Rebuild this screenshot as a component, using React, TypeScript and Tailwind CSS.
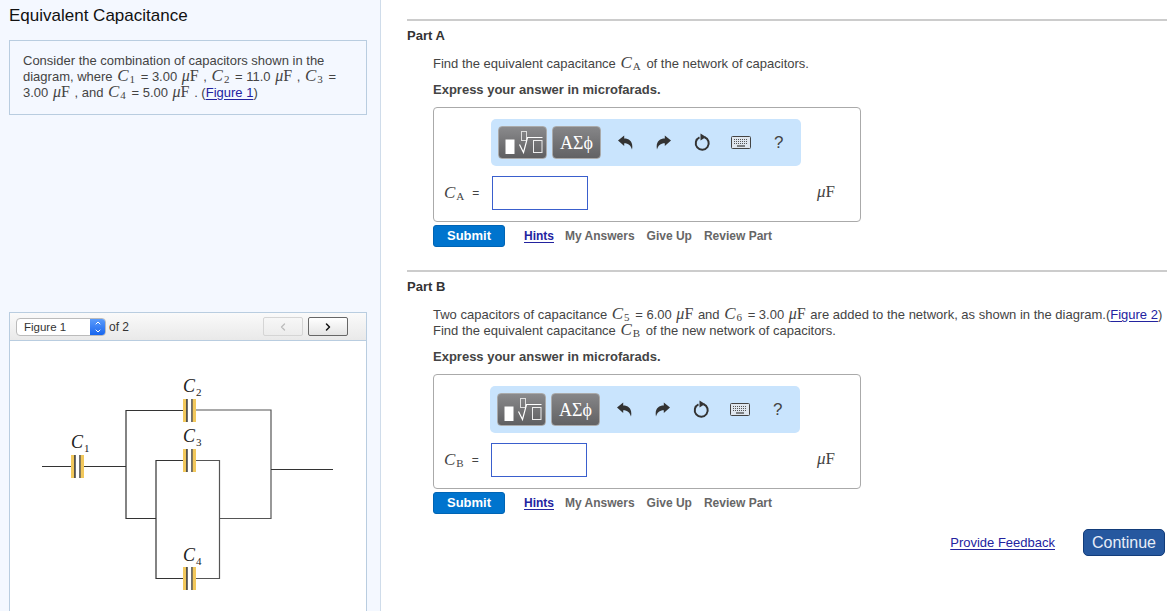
import { ChevronLeft, ChevronRight, ChevronUp, ChevronDown } from "lucide-react";
import type { ReactNode } from "react";

const Sym = ({ c, sub }: { c: string; sub?: string }) => (
    <span className="font-['Liberation_Serif',serif] whitespace-nowrap text-[#444] leading-[0] ml-[1px] mr-[2px]">
        <i className="text-[17px]">{c}</i>
        {sub && <span className="text-[11px] relative top-[2px] ml-[1px]">{sub}</span>}
    </span>
);

const Unit = ({ big }: { big?: boolean }) => (
    <span className={`font-['Liberation_Serif',serif] text-[#444] whitespace-nowrap leading-[0] mx-[1px] ${big ? "text-[17px]" : "text-[16px]"}`}><i>μ</i>F</span>
);

const Link = ({ children }: { children: ReactNode }) => (
    <a className="text-[#23239f] underline underline-offset-2">{children}</a>
);

const UndoIcon = ({ flip }: { flip?: boolean }) => (
    <svg className={flip ? "-scale-x-100" : ""} width="15" height="15" viewBox="0 0 15 15">
        <path d="M0 5.5 L6.2 0.5 V3.6 C11.5 3.6 15.5 7 14 14.5 C13 10.5 10.5 8.2 6.2 8.2 V11 Z" fill="#333" />
    </svg>
);

const ReloadIcon = () => (
    <svg width="17" height="19" viewBox="0 0 17 19" fill="none">
        <path d="M10.5 4.2 A6.5 6.5 0 1 1 5.5 4.4" stroke="#333" strokeWidth="2" />
        <path d="M6.5 0.5 L12 4 L6.5 7.5 Z" fill="#333" />
    </svg>
);

const KeyboardIcon = () => (
    <svg width="20" height="13" viewBox="0 0 20 13">
        <rect x="0.5" y="0.5" width="19" height="12" rx="1" fill="#dfe6ee" stroke="#444" />
        <path d="M3 3.5h14M3 5.5h14M3 7.5h14" stroke="#555" strokeWidth="1" strokeDasharray="1 1" />
        <path d="M6 10h8" stroke="#555" strokeWidth="1.4" />
    </svg>
);

const TemplatesIcon = () => (
    <svg width="40" height="28" viewBox="0 0 40 28" fill="none">
        <rect x="2.5" y="10.5" width="9" height="14.5" fill="#fff" />
        <rect x="18.5" y="2.5" width="5" height="9" stroke="#ddd" strokeWidth="1" />
        <path d="M16.5 15.5 L20.5 23.5 L24.5 8.5 H39.5" stroke="#fff" strokeWidth="1.2" />
        <rect x="30.5" y="11.5" width="8.5" height="12" stroke="#eee" strokeWidth="1" />
    </svg>
);

const Toolbar = ({ className }: { className: string }) => (
    <div className={`h-[47px] w-[310px] rounded-[5px] bg-[#c9e4fd] flex items-center pl-[7px] ${className}`}>
        <button className="w-[49px] h-[33px] rounded-[4px] bg-gradient-to-b from-[#8a8a8c] to-[#5f5f61] border border-[#aaa] flex items-center justify-center">
            <TemplatesIcon />
        </button>
        <button className="w-[49px] h-[33px] ml-[5px] rounded-[4px] bg-gradient-to-b from-[#868688] to-[#626264] border border-[#aaa] text-white text-[18px] font-['Liberation_Serif',serif] flex items-center justify-center">
            ΑΣϕ
        </button>
        <div className="flex items-center">
            <span className="ml-[17px] flex"><UndoIcon /></span>
            <span className="ml-[23px] flex"><UndoIcon flip /></span>
            <span className="ml-[23px] flex"><ReloadIcon /></span>
            <span className="ml-[20px] flex"><KeyboardIcon /></span>
            <span className="ml-[23px] text-[17px] text-[#444]">?</span>
        </div>
    </div>
);

const AnswerBox = ({ name, toolbarLeft, inputLeft }: { name: string; toolbarLeft: string; inputLeft: string }) => (
    <div className="h-[115px] w-[428px] border border-[#aaa] rounded-[4px] ml-[26px] pt-[11px]">
        <Toolbar className={toolbarLeft} />
        <div className="flex items-center mt-[10px] h-[34px] relative">
            <span className="ml-[9px] w-[49px] flex items-center gap-[6px] text-[#444]">
                <Sym c="C" sub={name} /><span className="text-[12px]">=</span>
            </span>
            <div className={`w-[96px] h-[34px] border border-[#3a5fcd] bg-white ${inputLeft}`} />
            <span className="ml-auto mr-[24px]"><Unit big /></span>
        </div>
    </div>
);

const Actions = () => (
    <div className="flex items-center h-[22px] ml-[26px] mt-[3px] font-bold text-[12px] text-[#666]">
        <button className="w-[72px] h-[22px] bg-[#0074ce] border border-[#0064b4] rounded-[3px] text-white text-[13px] font-bold">Submit</button>
        <a className="ml-[19px] text-[#23239f] underline underline-offset-2">Hints</a>
        <span className="ml-[11px]">My Answers</span>
        <span className="ml-[12px]">Give Up</span>
        <span className="ml-[12px]">Review Part</span>
    </div>
);

const Capacitor = ({ x, y }: { x: number; y: number }) => (
    <g>
        <rect x={x} y={y - 11.5} width="3.3" height="23" fill="#f2c85c" />
        <rect x={x + 3.3} y={y - 11.5} width="1.3" height="23" fill="#111" />
        <rect x={x + 8.4} y={y - 11.5} width="1.3" height="23" fill="#111" />
        <rect x={x + 9.7} y={y - 11.5} width="3.3" height="23" fill="#f2c85c" />
    </g>
);

const CapLabel = ({ x, y, n }: { x: number; y: number; n: string }) => (
    <text x={x} y={y} fontFamily="'Liberation Serif', serif" fill="#222">
        <tspan fontStyle="italic" fontSize="18">C</tspan>
        <tspan fontSize="11" dx="1" dy="4">{n}</tspan>
    </text>
);

const Circuit = () => (
    <svg className="block" width="356" height="270" viewBox="10 341 356 270" fill="none">
        <g stroke="#333" strokeWidth="1.2">
            <path d="M42 466.5H71M83 466.5H126" />
            <path d="M183 410.5H126V518.5H156" />
            <path d="M196 410H271V518.5H220" stroke="#555" />
            <path d="M183 460.5H156V578.5H183" />
            <path d="M196 460.5H219.5V578.5H196" stroke="#555" />
            <path d="M271 469.5H333" />
        </g>
        <Capacitor x={71} y={466.5} />
        <Capacitor x={183} y={410.5} />
        <Capacitor x={183} y={460.5} />
        <Capacitor x={183} y={578.5} />
        <CapLabel x={71} y={448} n="1" />
        <CapLabel x={183} y={392} n="2" />
        <CapLabel x={183} y={442} n="3" />
        <CapLabel x={183} y={561} n="4" />
    </svg>
);

const FigureBar = () => (
    <div className="h-[28px] flex items-center bg-gradient-to-b from-[#fafafa] to-[#e9e9e9] border-b border-[#b9cde0] pl-[6px] text-[12px] text-[#333]">
        <div className="w-[90px] h-[18px] bg-white border border-[#bbb] rounded-[4px] flex items-center pl-[7px] relative overflow-hidden text-[11.5px]">
            Figure 1
            <span className="absolute right-0 top-0 bottom-0 w-[15px] bg-gradient-to-b from-[#5a9bfb] to-[#1665ee] flex flex-col items-center justify-center text-white">
                <ChevronUp size={8} strokeWidth={3} />
                <ChevronDown size={8} strokeWidth={3} />
            </span>
        </div>
        <span className="ml-[3px]">of 2</span>
        <button className="ml-[134px] w-[40px] h-[19px] border border-[#d5d5d5] rounded-[2px] flex items-center justify-center text-[#bbb]">
            <ChevronLeft size={12} strokeWidth={2.5} />
        </button>
        <button className="ml-[5px] w-[40px] h-[19px] border border-[#666] rounded-[2px] bg-gradient-to-b from-white to-[#e4e4e4] flex items-center justify-center text-[#111]">
            <ChevronRight size={12} strokeWidth={3} />
        </button>
    </div>
);

const App = () => {
    return (
        <div className="h-[611px] w-[1173px] overflow-hidden flex bg-white font-['Liberation_Sans',Arial,sans-serif] text-[13px] leading-[16px] text-[#444]">
            <aside className="w-[381px] shrink-0 bg-[#f4f8ff] border-r border-[#cfdcea] pl-[9px] pr-[13px]">
                <h1 className="pt-[6px] h-[40px] text-[17px] leading-[20px] text-[#111]">Equivalent Capacitance</h1>
                <div className="h-[75px] border border-[#b9cde0] pl-[13px] pr-[10px] pt-[12px]">
                    <p className="whitespace-nowrap">
                        Consider the combination of capacitors shown in the<br />
                        diagram, where <Sym c="C" sub="1" /> = 3.00 <Unit /> , <Sym c="C" sub="2" /> = 11.0 <Unit /> , <Sym c="C" sub="3" /> =<br />
                        3.00 <Unit /> , and <Sym c="C" sub="4" /> = 5.00 <Unit /> . (<Link>Figure 1</Link>)
                    </p>
                </div>
                <div className="mt-[197px] h-[320px] border border-[#b9cde0] bg-white">
                    <FigureBar />
                    <Circuit />
                </div>
            </aside>
            <main className="flex-1 pl-[26px] pr-[6px]">
                <section className="pt-[19px]">
                    <div className="border-t-2 border-[#ccc]" />
                    <h2 className="mt-[7px] font-bold text-[13px] text-[#333]">Part A</h2>
                    <p className="ml-[26px] mt-[12px]">Find the equivalent capacitance <Sym c="C" sub="A" /> of the network of capacitors.</p>
                    <p className="ml-[26px] mt-[10px] font-bold">Express your answer in microfarads.</p>
                    <div className="mt-[9px]">
                        <AnswerBox name="A" toolbarLeft="ml-[57px]" inputLeft="ml-0" />
                    </div>
                    <Actions />
                </section>
                <section className="mt-[23px]">
                    <div className="border-t-2 border-[#ccc]" />
                    <h2 className="mt-[7px] font-bold text-[13px] text-[#333]">Part B</h2>
                    <p className="ml-[26px] mt-[12px] whitespace-nowrap">
                        Two capacitors of capacitance <Sym c="C" sub="5" /> = 6.00 <Unit /> and <Sym c="C" sub="6" /> = 3.00 <Unit /> are added to the network, as shown in the diagram.(<Link>Figure 2</Link>)<br />
                        Find the equivalent capacitance <Sym c="C" sub="B" /> of the new network of capacitors.
                    </p>
                    <p className="ml-[26px] mt-[10px] font-bold">Express your answer in microfarads.</p>
                    <div className="mt-[9px]">
                        <AnswerBox name="B" toolbarLeft="ml-[56px]" inputLeft="-ml-[1px]" />
                    </div>
                    <Actions />
                </section>
                <div className="flex items-center justify-end mt-[15px] mr-[2px]">
                    <Link>Provide Feedback</Link>
                    <button className="ml-[28px] w-[82px] h-[27px] rounded-[5px] bg-[#26589f] border border-[#123c7a] text-[#e8eef8] text-[16px]">Continue</button>
                </div>
            </main>
        </div>
    );
};

export default App;
